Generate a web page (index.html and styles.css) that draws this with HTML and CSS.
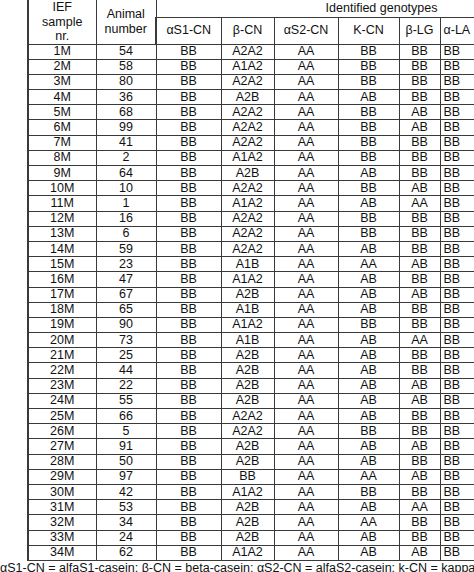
FILE: index.html
```html
<!DOCTYPE html>
<html>
<head>
<meta charset="utf-8">
<link rel="stylesheet" href="styles.css">
</head>
<body>
<div class="page">
<table class="geno">
<colgroup>
<col class="c-ief"><col class="c-animal"><col class="c-s1"><col class="c-b"><col class="c-s2"><col class="c-k"><col class="c-lg"><col class="c-la">
</colgroup>
<thead>
<tr class="h1">
<th rowspan="2" class="ief">IEF<br>sample<br>nr.</th>
<th rowspan="2">Animal<br>number</th>
<th colspan="6" class="group"><span class="group-label">Identified genotypes</span></th>
</tr>
<tr class="h2">
<th>αS1-CN</th><th>β-CN</th><th>αS2-CN</th><th>K-CN</th><th>β-LG</th><th class="last">α-LA</th>
</tr>
</thead>
<tbody>
<tr><td>1M</td><td>54</td><td>BB</td><td>A2A2</td><td>AA</td><td>BB</td><td>BB</td><td class="last">BB</td></tr>
<tr><td>2M</td><td>58</td><td>BB</td><td>A1A2</td><td>AA</td><td>BB</td><td>BB</td><td class="last">BB</td></tr>
<tr><td>3M</td><td>80</td><td>BB</td><td>A2A2</td><td>AA</td><td>BB</td><td>BB</td><td class="last">BB</td></tr>
<tr><td>4M</td><td>36</td><td>BB</td><td>A2B</td><td>AA</td><td>AB</td><td>BB</td><td class="last">BB</td></tr>
<tr><td>5M</td><td>68</td><td>BB</td><td>A2A2</td><td>AA</td><td>BB</td><td>AB</td><td class="last">BB</td></tr>
<tr><td>6M</td><td>99</td><td>BB</td><td>A2A2</td><td>AA</td><td>BB</td><td>AB</td><td class="last">BB</td></tr>
<tr><td>7M</td><td>41</td><td>BB</td><td>A2A2</td><td>AA</td><td>BB</td><td>BB</td><td class="last">BB</td></tr>
<tr><td>8M</td><td>2</td><td>BB</td><td>A1A2</td><td>AA</td><td>BB</td><td>BB</td><td class="last">BB</td></tr>
<tr><td>9M</td><td>64</td><td>BB</td><td>A2B</td><td>AA</td><td>AB</td><td>BB</td><td class="last">BB</td></tr>
<tr><td>10M</td><td>10</td><td>BB</td><td>A2A2</td><td>AA</td><td>BB</td><td>AB</td><td class="last">BB</td></tr>
<tr><td>11M</td><td>1</td><td>BB</td><td>A1A2</td><td>AA</td><td>AB</td><td>AA</td><td class="last">BB</td></tr>
<tr><td>12M</td><td>16</td><td>BB</td><td>A2A2</td><td>AA</td><td>BB</td><td>BB</td><td class="last">BB</td></tr>
<tr><td>13M</td><td>6</td><td>BB</td><td>A2A2</td><td>AA</td><td>BB</td><td>BB</td><td class="last">BB</td></tr>
<tr><td>14M</td><td>59</td><td>BB</td><td>A2A2</td><td>AA</td><td>AB</td><td>BB</td><td class="last">BB</td></tr>
<tr><td>15M</td><td>23</td><td>BB</td><td>A1B</td><td>AA</td><td>AA</td><td>AB</td><td class="last">BB</td></tr>
<tr><td>16M</td><td>47</td><td>BB</td><td>A1A2</td><td>AA</td><td>AB</td><td>BB</td><td class="last">BB</td></tr>
<tr><td>17M</td><td>67</td><td>BB</td><td>A2B</td><td>AA</td><td>AB</td><td>AB</td><td class="last">BB</td></tr>
<tr><td>18M</td><td>65</td><td>BB</td><td>A1B</td><td>AA</td><td>AB</td><td>BB</td><td class="last">BB</td></tr>
<tr><td>19M</td><td>90</td><td>BB</td><td>A1A2</td><td>AA</td><td>BB</td><td>BB</td><td class="last">BB</td></tr>
<tr><td>20M</td><td>73</td><td>BB</td><td>A1B</td><td>AA</td><td>AB</td><td>AA</td><td class="last">BB</td></tr>
<tr><td>21M</td><td>25</td><td>BB</td><td>A2B</td><td>AA</td><td>AB</td><td>BB</td><td class="last">BB</td></tr>
<tr><td>22M</td><td>44</td><td>BB</td><td>A2B</td><td>AA</td><td>AB</td><td>BB</td><td class="last">BB</td></tr>
<tr><td>23M</td><td>22</td><td>BB</td><td>A2B</td><td>AA</td><td>AB</td><td>AB</td><td class="last">BB</td></tr>
<tr><td>24M</td><td>55</td><td>BB</td><td>A2B</td><td>AA</td><td>AB</td><td>AB</td><td class="last">BB</td></tr>
<tr><td>25M</td><td>66</td><td>BB</td><td>A2A2</td><td>AA</td><td>AB</td><td>BB</td><td class="last">BB</td></tr>
<tr><td>26M</td><td>5</td><td>BB</td><td>A2A2</td><td>AA</td><td>BB</td><td>BB</td><td class="last">BB</td></tr>
<tr><td>27M</td><td>91</td><td>BB</td><td>A2B</td><td>AA</td><td>AB</td><td>AB</td><td class="last">BB</td></tr>
<tr><td>28M</td><td>50</td><td>BB</td><td>A2B</td><td>AA</td><td>AB</td><td>BB</td><td class="last">BB</td></tr>
<tr><td>29M</td><td>97</td><td>BB</td><td>BB</td><td>AA</td><td>AA</td><td>AB</td><td class="last">BB</td></tr>
<tr><td>30M</td><td>42</td><td>BB</td><td>A1A2</td><td>AA</td><td>BB</td><td>BB</td><td class="last">BB</td></tr>
<tr><td>31M</td><td>53</td><td>BB</td><td>A2B</td><td>AA</td><td>AB</td><td>AA</td><td class="last">BB</td></tr>
<tr><td>32M</td><td>34</td><td>BB</td><td>A2B</td><td>AA</td><td>AA</td><td>BB</td><td class="last">BB</td></tr>
<tr><td>33M</td><td>24</td><td>BB</td><td>A2B</td><td>AA</td><td>AB</td><td>BB</td><td class="last">BB</td></tr>
<tr><td>34M</td><td>62</td><td>BB</td><td>A1A2</td><td>AA</td><td>AB</td><td>AB</td><td class="last">BB</td></tr>
</tbody>
</table>
<p class="note">αS1-CN = alfaS1-casein; β-CN = beta-casein; αS2-CN = alfaS2-casein; k-CN = kappa -casein; β-LG = beta-lactoglobulin</p>
</div>
</body>
</html>
```
FILE: styles.css
```css
html, body {
  margin: 0;
  padding: 0;
  background: #ffffff;
  overflow: hidden;
}
body {
  width: 474px;
  height: 572px;
  font-family: "Liberation Sans", Arial, sans-serif;
  color: #111111;
}
.page {
  width: 540px;
}
.geno {
  margin-left: 27px;
  border-collapse: collapse;
  table-layout: fixed;
  width: 472px;
  font-size: 12.5px;
}
.c-ief { width: 68px; }
.c-animal { width: 60px; }
.c-s1 { width: 65px; }
.c-b { width: 53px; }
.c-s2 { width: 64px; }
.c-k { width: 61px; }
.c-lg { width: 41px; }
.c-la { width: 60px; }
.geno th, .geno td {
  border: 1px solid #3a3a3a;
  padding: 0;
  text-align: center;
  white-space: nowrap;
  overflow: hidden;
}
.geno th {
  font-weight: normal;
  font-size: 12.5px;
  line-height: 14.5px;
}
.geno tr > :first-child {
  border-left: 2px solid #3a3a3a;
}
.geno thead tr:first-child th {
  border-top: none;
}
.h1 { height: 17px; }
.h2 { height: 26px; }
.group {
  text-align: left;
}
.group-label {
  display: inline-block;
  padding-left: 107px;
}
.geno td {
  height: 14.2px;
  line-height: 13px;
}
.geno .last {
  text-align: left;
  padding-left: 3px;
  border-right: none;
}
.note {
  margin: 0;
  font-size: 12.5px;
  line-height: 14px;
  white-space: nowrap;
}
```
